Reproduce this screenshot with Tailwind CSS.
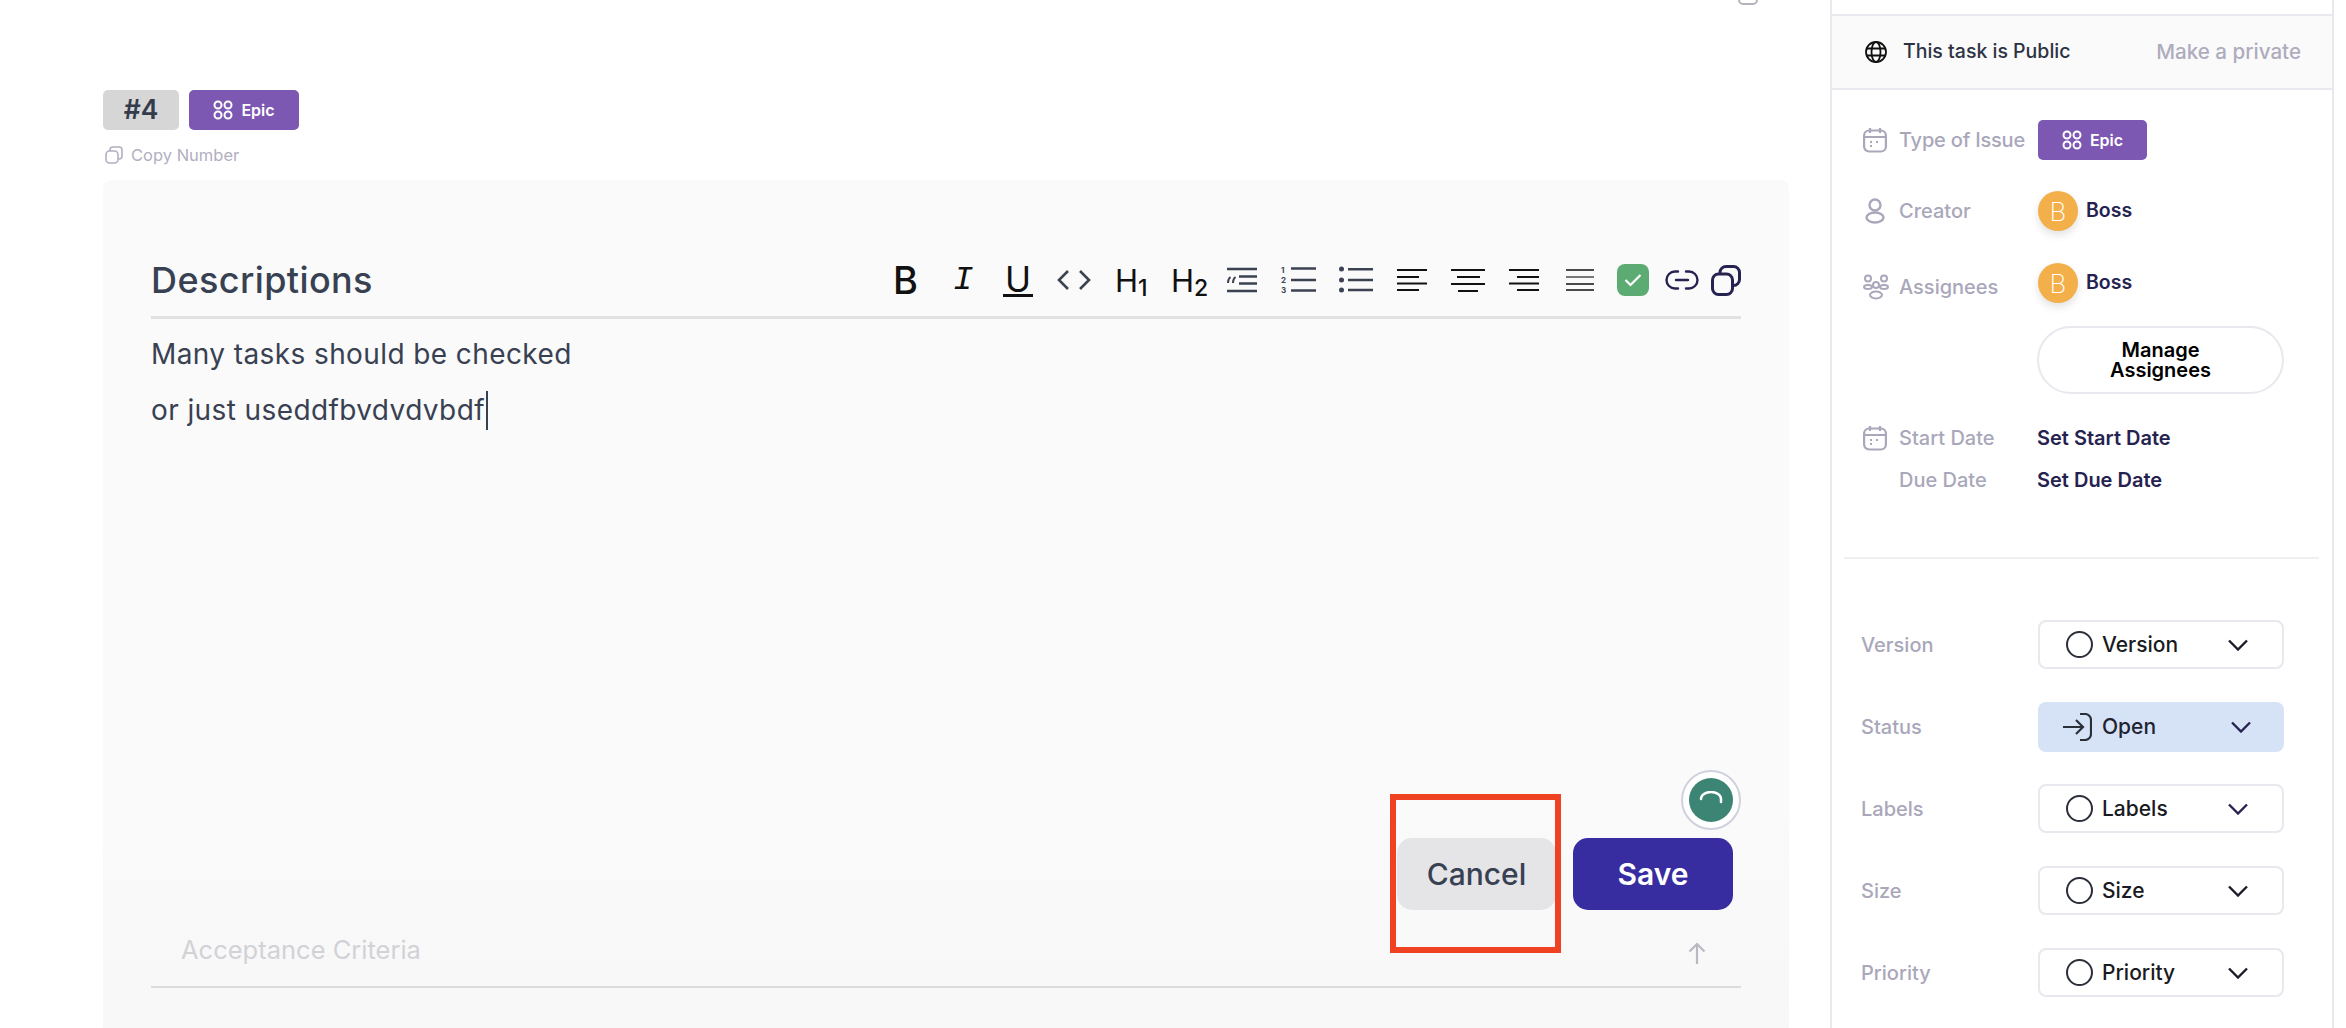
<!DOCTYPE html>
<html>
<head>
<meta charset="utf-8">
<script src="https://cdn.jsdelivr.net/npm/@tailwindcss/browser@4"></script>
<title>Task</title>
</head>
<body class="bg-white font-['Inter','Liberation_Sans',sans-serif] overflow-hidden">
<div class="flex w-[2346px] h-[1028px] overflow-hidden">
  <!-- main column -->
  <main class="relative w-[1830px] h-[1028px] shrink-0 pl-[103px] pr-[41px] pt-[90px]">
    <svg class="absolute left-[1737px] top-[-8px] w-[22px] h-[14px]" viewBox="0 0 22 14" fill="none" stroke="#b4b4bc" stroke-width="2"><rect x="2" y="-2" width="18" height="14" rx="4"/></svg>
    <div class="flex gap-[10px] h-[40px]">
      <div class="w-[76px] h-[40px] rounded-[5px] bg-[#d6d6d6] text-[#343c4c] text-[26.500px] font-semibold flex items-center justify-center">#4</div>
      <div class="w-[110px] h-[40px] rounded-[5px] bg-[#7c58b2] text-white text-[16px] font-semibold flex items-center justify-center gap-[8px]">
        <svg class="w-[20px] h-[20px]" viewBox="0 0 20 20" fill="none" stroke="white" stroke-width="2"><rect x="1.500" y="1.500" width="7" height="7" rx="3.500"/><rect x="11.500" y="1.500" width="7" height="7" rx="3.500"/><rect x="1.500" y="11.500" width="7" height="7" rx="3.500"/><rect x="11.500" y="11.500" width="7" height="7" rx="3.500"/></svg>
        Epic
      </div>
    </div>
    <div class="flex items-center gap-[8px] mt-[15px] h-[20px] text-[16.500px] text-[#b1afc1] pl-[2px]">
      <svg class="w-[18px] h-[18px]" viewBox="0 0 18 18" fill="none" stroke="#b1afc1" stroke-width="1.600"><rect x="1" y="5" width="12" height="12" rx="3.500"/><path d="M5 5V4a3 3 0 0 1 3-3h6a3 3 0 0 1 3 3v6a3 3 0 0 1-3 3h-1"/></svg>
      Copy Number
    </div>

    <!-- card -->
    <section class="relative mt-[15px] h-[900px] w-[1686px] rounded-[8px] bg-gradient-to-b from-[#fafafa] from-70% to-[#f7f7f7] px-[48px] pt-[75px]">
      <div class="flex items-center justify-between h-[50px]">
        <h2 class="text-[36px] font-medium text-[#384152] leading-none tracking-[0.4px]">Descriptions</h2>
        <div class="flex items-center text-[#111] h-[40px]">
          <span class="w-[30px] mr-[30px] text-[38px] font-medium leading-none">B</span>
          <span class="w-[20px] mr-[30px] text-[34px] italic font-['Liberation_Mono',monospace] leading-none">I</span>
          <span class="w-[30px] mr-[24px] text-[35px] leading-[30px] border-b-[3px] border-[#111] text-center font-normal">U</span>
          <svg class="w-[34px] h-[24px] mr-[24px]" viewBox="0 0 34 24" fill="none" stroke="#3b4252" stroke-width="2.600"><path d="M11 3 2 12l9 9M23 3l9 9-9 9"/></svg>
          <span class="w-[34px] mr-[22px] text-[31px] leading-none whitespace-nowrap">H<span class="text-[23px] font-medium relative top-[4px]">1</span></span>
          <span class="w-[34px] mr-[22px] text-[31px] leading-none whitespace-nowrap">H<span class="text-[23px] font-medium relative top-[4px]">2</span></span>
          <svg class="w-[30px] h-[26px] mr-[24px]" viewBox="0 0 30 26" fill="none" stroke="#3b4252" stroke-width="2.400"><path d="M0 2h30M12 9.500h18M12 16.500h18M0 24h30"/><path d="M1 16c0-3 1-5 2.500-6M6 16c0-3 1-5 2.500-6" stroke-width="2"/></svg>
          <svg class="w-[36px] h-[28px] mr-[20px]" viewBox="0 0 36 28" fill="none" stroke="#3b4252" stroke-width="2.400"><path d="M10 2.500h25M10 14h25M10 24.500h25"/><text x="0" y="7" font-size="8" font-weight="700" fill="#3b4252" stroke="none">1</text><text x="0" y="17" font-size="8" font-weight="700" fill="#3b4252" stroke="none">2</text><text x="0" y="27" font-size="8" font-weight="700" fill="#3b4252" stroke="none">3</text></svg>
          <svg class="w-[36px] h-[28px] mr-[24px]" viewBox="0 0 36 28" fill="#3b4252" stroke="none"><circle cx="4.500" cy="3" r="2.500"/><circle cx="4.500" cy="14" r="2.500"/><circle cx="4.500" cy="24" r="2.500"/><path d="M11 2h25v2.500H11zM11 12.700h25v2.500H11zM11 22.800h25v2.500H11z"/></svg>
          <svg class="w-[30px] h-[24px] mr-[24px]" viewBox="0 0 30 24" fill="none" stroke="#111" stroke-width="2.200"><path d="M0 2h30M0 9h22M0 15.500h30M0 22h22"/></svg>
          <svg class="w-[34px] h-[24px] mr-[24px]" viewBox="0 0 34 24" fill="none" stroke="#111" stroke-width="2.200"><path d="M0 2h34M6 9h23M0 16h34M7 23h20"/></svg>
          <svg class="w-[30px] h-[24px] mr-[27px]" viewBox="0 0 30 24" fill="none" stroke="#111" stroke-width="2.200"><path d="M0 2h30M8 9h22M0 15.500h30M8 22h22"/></svg>
          <svg class="w-[28px] h-[22px] mr-[23px]" viewBox="0 0 28 22" fill="none" stroke="#111" stroke-width="1.500"><path d="M0 1h28M0 15h28M0 21h28"/><path d="M0 8h28" stroke="#777" stroke-width="2"/></svg>
          <div class="w-[32px] h-[32px] rounded-[8px] bg-[#5bab72] mr-[16px] flex items-center justify-center">
            <svg class="w-[18px] h-[14px]" viewBox="0 0 18 14" fill="none" stroke="white" stroke-width="2.200"><path d="M1.500 7l5 5 10-10"/></svg>
          </div>
          <svg class="w-[34px] h-[20px] mr-[12px]" viewBox="0 0 34 20" fill="none" stroke="#272351" stroke-width="2.400" stroke-linecap="round"><path d="M13 1.500H10a8.500 8.500 0 0 0 0 17h3M21 1.500h3a8.500 8.500 0 0 1 0 17h-3M11 10h12"/></svg>
          <svg class="w-[30px] h-[31px]" viewBox="0 0 30 31" fill="none" stroke="#272351" stroke-width="3"><rect x="1.500" y="9" width="20" height="20.500" rx="6"/><path d="M9 9V7.500a6 6 0 0 1 6-6h7.500a6 6 0 0 1 6 6v7a6 6 0 0 1-6 6h-1"/></svg>
        </div>
      </div>
      <div class="h-[3px] mt-[11px] bg-[#e1e1e1]"></div>
      <div class="mt-[7px] text-[28px] leading-[56px] text-[#384152] tracking-[0.4px]">
        <p>Many tasks should be checked</p>
        <p class="flex items-center">or just useddfbvdvdvbdf<span class="inline-block w-[2px] h-[39px] bg-[#384152] ml-[1px]"></span></p>
      </div>

      <!-- Acceptance criteria row -->
      <div class="absolute left-[48px] top-[735px] w-[1590px] h-[73px] pl-[30px] flex items-center border-b-[2px] border-[#dcdcdc] text-[25.500px] text-[#d2d2d6]">
        Acceptance Criteria
        <svg class="absolute left-[1537px] top-[27px] w-[18px] h-[22px]" viewBox="0 0 18 22" fill="none" stroke="#b9b9c3" stroke-width="2.200"><path d="M9 22V2M1.500 9.500 9 2l7.500 7.500"/></svg>
      </div>

      <!-- floating bot -->
      <div class="absolute left-[1578px] top-[590px] w-[60px] h-[60px] rounded-full border-[2px] border-[#cfd2dd] bg-white flex items-center justify-center">
        <div class="w-[44px] h-[44px] rounded-full bg-[#3c8574] flex items-center justify-center">
          <svg class="w-[26px] h-[18px]" viewBox="0 0 26 18" fill="none" stroke="white" stroke-width="2.500" stroke-linecap="round"><path d="M3 8a10 7 0 0 1 20 0v3"/></svg>
        </div>
      </div>

      <!-- buttons -->
      <div class="absolute left-[1294px] top-[658px] flex gap-[17px]">
        <button class="w-[159px] h-[72px] rounded-[15px] bg-[#e5e5e8] text-[#384152] text-[30px] font-medium">Cancel</button>
        <button class="w-[160px] h-[72px] rounded-[15px] bg-[#372ca0] text-white text-[30px] font-semibold">Save</button>
      </div>

      <!-- annotation -->
      <div class="absolute left-[1287px] top-[614px] w-[171px] h-[159px] border-[6px] border-[#ee4223]"></div>
    </section>
  </main>

  <!-- sidebar -->
  <aside class="w-[504px] h-[1028px] shrink-0 border-x-[2px] border-[#e8e8ee] pt-[14px]">
    <div class="h-[76px] border-y-[2px] border-[#e8e8ee] bg-[#fafafa] flex items-center justify-between pl-[33px] pr-[31px]">
      <div class="flex items-center gap-[16px] text-[#2c3242] font-medium text-[19.500px]">
        <svg class="w-[22px] h-[22px]" viewBox="0 0 22 22" fill="none" stroke="#111" stroke-width="1.800"><circle cx="11" cy="11" r="10"/><ellipse cx="11" cy="11" rx="4.500" ry="10"/><path d="M1 7.500h20M1 14.500h20"/></svg>
        <span>This task is Public</span>
      </div>
      <span class="text-[#aeacbe] font-medium text-[20.600px]">Make a private</span>
    </div>

    <div class="pl-[31px] pr-[48px]">
      <div class="flex items-center h-[40px] mt-[30px] text-[20px] text-[#a9a7ba] font-medium">
        <svg class="w-[24px] h-[26px] mr-[12px] shrink-0" viewBox="0 0 24 26" fill="none" stroke="#a9a7ba" stroke-width="2.200"><rect x="1.100" y="3.500" width="21.800" height="21" rx="5"/><path d="M1.500 10h21M7 1v5M17 1v5M7 15h2M13 15h2M7 19h2" /></svg>
        <span class="w-[168px] shrink-0 whitespace-nowrap -tracking-[0.2px]">Type of Issue</span>
        <div class="ml-[-29px] w-[109px] h-[40px] rounded-[5px] bg-[#7c58b2] text-white text-[16px] font-semibold flex items-center justify-center gap-[8px]">
          <svg class="w-[20px] h-[20px]" viewBox="0 0 20 20" fill="none" stroke="white" stroke-width="2"><rect x="1.500" y="1.500" width="7" height="7" rx="3.500"/><rect x="11.500" y="1.500" width="7" height="7" rx="3.500"/><rect x="1.500" y="11.500" width="7" height="7" rx="3.500"/><rect x="11.500" y="11.500" width="7" height="7" rx="3.500"/></svg>
          Epic
        </div>
      </div>

      <div class="flex items-center h-[40px] mt-[31px] text-[20px] text-[#a9a7ba] font-medium">
        <svg class="w-[20px] h-[26px] mr-[14px] ml-[2px] shrink-0" viewBox="0 0 20 26" fill="none" stroke="#a9a7ba" stroke-width="2.400"><circle cx="10" cy="7" r="5.500"/><ellipse cx="10" cy="19.500" rx="8.500" ry="5"/></svg>
        <span class="w-[139px] shrink-0">Creator</span>
        <div class="w-[40px] h-[40px] rounded-full bg-[#f3b04a] text-white text-[26px] font-extralight flex items-center justify-center shadow-[0_4px_8px_rgba(0,0,0,0.12)]">B</div>
        <span class="ml-[8px] text-[19.500px] font-semibold text-[#262250]">Boss</span>
      </div>

      <div class="flex items-center h-[40px] mt-[32px] text-[20px] text-[#a9a7ba] font-medium">
        <svg class="w-[26px] h-[26px] mr-[10px] shrink-0 relative top-[4px]" viewBox="0 0 26 26" fill="none" stroke="#a9a7ba" stroke-width="2"><circle cx="5" cy="4.500" r="3"/><circle cx="21" cy="4.500" r="3"/><circle cx="13" cy="11" r="3"/><ellipse cx="5" cy="13" rx="4" ry="2"/><ellipse cx="21" cy="13" rx="4" ry="2"/><ellipse cx="13" cy="21" rx="6" ry="3.500"/></svg>
        <span class="w-[139px] shrink-0 relative top-[4px]">Assignees</span>
        <div class="w-[40px] h-[40px] rounded-full bg-[#f3b04a] text-white text-[26px] font-extralight flex items-center justify-center shadow-[0_4px_8px_rgba(0,0,0,0.12)]">B</div>
        <span class="ml-[8px] text-[19.500px] font-semibold text-[#262250]">Boss</span>
      </div>

      <button class="block ml-[174px] mt-[23px] w-[247px] h-[68px] rounded-full border-[2px] border-[#e8e8ee] bg-white text-[20px] leading-[20px] font-semibold text-black">Manage<br>Assignees</button>

      <div class="flex items-center h-[40px] mt-[24px] text-[20px] text-[#a9a7ba] font-medium">
        <svg class="w-[24px] h-[26px] mr-[12px] shrink-0" viewBox="0 0 24 26" fill="none" stroke="#a9a7ba" stroke-width="2.200"><rect x="1.100" y="3.500" width="21.800" height="21" rx="5"/><path d="M1.500 10h21M7 1v5M17 1v5M7 15h2M13 15h2M7 19h2"/></svg>
        <span class="w-[138px] shrink-0">Start Date</span>
        <span class="text-[20px] font-semibold text-[#262250]">Set Start Date</span>
      </div>
      <div class="flex items-center h-[40px] mt-[2px] text-[20px] text-[#a9a7ba] font-medium">
        <span class="ml-[36px] w-[138px] shrink-0">Due Date</span>
        <span class="text-[20px] font-semibold text-[#262250]">Set Due Date</span>
      </div>
    </div>

    <div class="mx-[12px] mt-[57px] w-[475px] h-[2px] bg-[#f0f0f3]"></div>

    <div class="pl-[29px] mt-[61px] flex flex-col gap-[33px] text-[21px]">
      <div class="flex items-center h-[49px]">
        <span class="w-[177px] text-[#a9a7ba] font-medium text-[20px]">Version</span>
        <div class="w-[246px] h-[49px] rounded-[8px] border-[2px] border-[#e8e8ee] bg-white flex items-center pl-[26px] pr-[34px] text-[#1a1a22] font-medium">
          <span class="w-[27px] h-[27px] rounded-full border-[2px] border-[#2b2f3a] mr-[9px]"></span>Version
          <svg class="ml-auto w-[20px] h-[12px]" viewBox="0 0 20 12" fill="none" stroke="#1c1c28" stroke-width="2.400"><path d="M1 1.500l9 9 9-9"/></svg>
        </div>
      </div>
      <div class="flex items-center h-[49px]">
        <span class="w-[177px] text-[#a9a7ba] font-medium text-[20px]">Status</span>
        <div class="w-[246px] h-[50px] rounded-[8px] bg-[#d6e3f7] flex items-center pl-[25px] pr-[33px] text-[#1f2330] font-medium">
          <svg class="w-[29px] h-[28px] mr-[10px]" viewBox="0 0 29 28" fill="none" stroke="#2b2f3a" stroke-width="2.200"><path d="M0 14h20M13 7l7 7-7 7M17 1h5a6 6 0 0 1 6 6v14a6 6 0 0 1-6 6h-5"/></svg>
          Open
          <svg class="ml-auto w-[20px] h-[12px]" viewBox="0 0 20 12" fill="none" stroke="#272351" stroke-width="2.400"><path d="M1 1.500l9 9 9-9"/></svg>
        </div>
      </div>
      <div class="flex items-center h-[49px]">
        <span class="w-[177px] text-[#a9a7ba] font-medium text-[20px]">Labels</span>
        <div class="w-[246px] h-[49px] rounded-[8px] border-[2px] border-[#e8e8ee] bg-white flex items-center pl-[26px] pr-[34px] text-[#1a1a22] font-medium">
          <span class="w-[27px] h-[27px] rounded-full border-[2px] border-[#2b2f3a] mr-[9px]"></span>Labels
          <svg class="ml-auto w-[20px] h-[12px]" viewBox="0 0 20 12" fill="none" stroke="#272351" stroke-width="2.400"><path d="M1 1.500l9 9 9-9"/></svg>
        </div>
      </div>
      <div class="flex items-center h-[49px]">
        <span class="w-[177px] text-[#a9a7ba] font-medium text-[20px]">Size</span>
        <div class="w-[246px] h-[49px] rounded-[8px] border-[2px] border-[#e8e8ee] bg-white flex items-center pl-[26px] pr-[34px] text-[#1a1a22] font-medium">
          <span class="w-[27px] h-[27px] rounded-full border-[2px] border-[#2b2f3a] mr-[9px]"></span>Size
          <svg class="ml-auto w-[20px] h-[12px]" viewBox="0 0 20 12" fill="none" stroke="#1c1c28" stroke-width="2.400"><path d="M1 1.500l9 9 9-9"/></svg>
        </div>
      </div>
      <div class="flex items-center h-[49px]">
        <span class="w-[177px] text-[#a9a7ba] font-medium text-[20px]">Priority</span>
        <div class="w-[246px] h-[49px] rounded-[8px] border-[2px] border-[#e8e8ee] bg-white flex items-center pl-[26px] pr-[34px] text-[#1a1a22] font-medium">
          <span class="w-[27px] h-[27px] rounded-full border-[2px] border-[#2b2f3a] mr-[9px]"></span>Priority
          <svg class="ml-auto w-[20px] h-[12px]" viewBox="0 0 20 12" fill="none" stroke="#1c1c28" stroke-width="2.400"><path d="M1 1.500l9 9 9-9"/></svg>
        </div>
      </div>
    </div>
  </aside>
</div>
</body>
</html>
